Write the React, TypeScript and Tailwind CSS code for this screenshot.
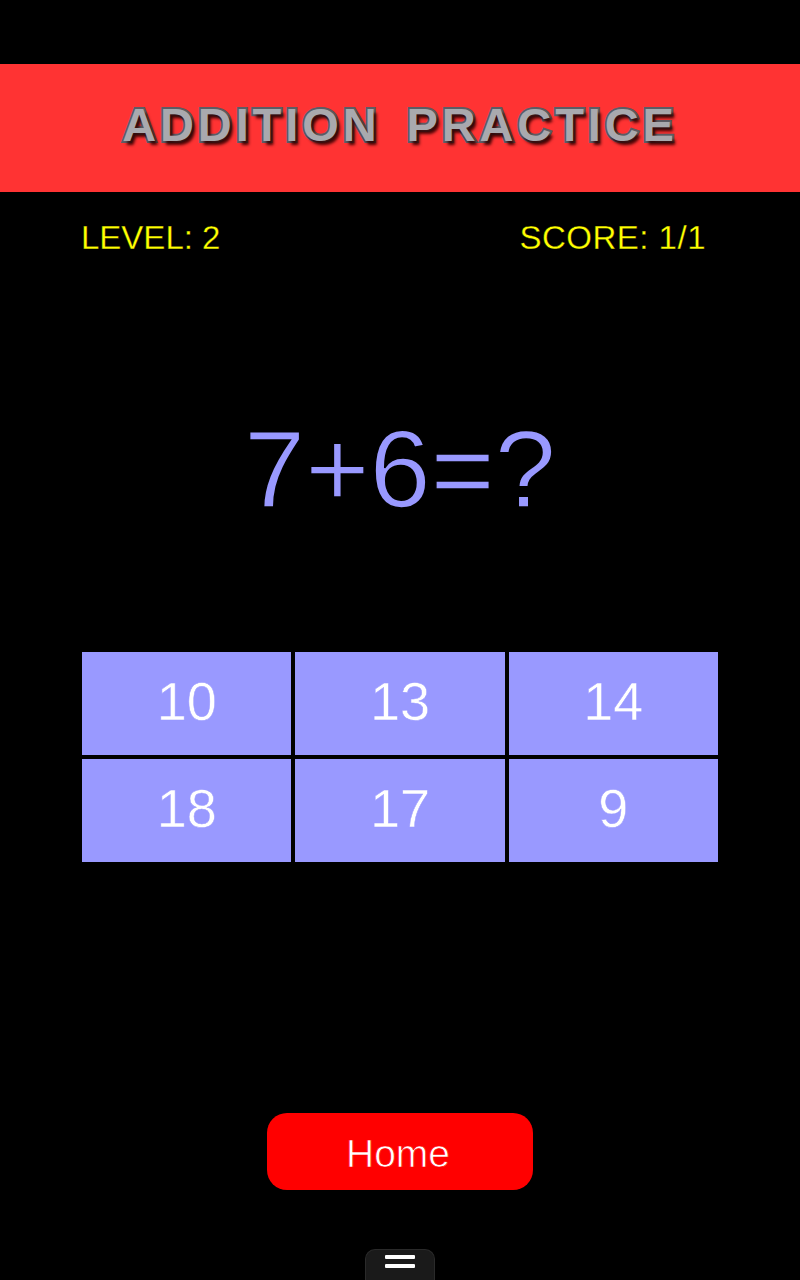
export default function App() {
  const answers = ['10', '13', '14', '18', '17', '9']

  return (
    <div className="flex h-[1280px] w-[800px] flex-col overflow-hidden bg-black font-['Liberation_Sans',Arial,sans-serif]">
      <div className="mt-16 flex h-32 items-center justify-center bg-[#ff3333] pb-[8px]">
        <h1 className="text-[47px] leading-none font-bold tracking-[3.9px] text-[#a9a9ae] [word-spacing:9px] [-webkit-text-stroke:4px_#5c5c64] [paint-order:stroke_fill] [text-shadow:3px_4px_3px_rgba(50,0,0,0.9)]">
          ADDITION PRACTICE
        </h1>
      </div>

      <div className="mt-[26px] flex justify-between pr-[94px] pl-[81px] text-[33px] leading-10 text-[#ffff00] [-webkit-text-stroke:0.3px_#000]">
        <span>LEVEL: 2</span>
        <span className="tracking-[0.5px]">SCORE: 1/1</span>
      </div>

      <div className="mt-[148px] text-center text-[110px] leading-[125px] text-[#9999ff] [-webkit-text-stroke:1.5px_#000]">7+6=?</div>

      <div className="mx-[82px] mt-[121px] grid grid-cols-3 gap-1">
        {answers.map((answer) => (
          <button key={answer} className="flex h-[103px] items-center justify-center bg-[#9999ff] pb-[4px] text-[54px] text-white [-webkit-text-stroke:0.5px_#9999ff]">
            {answer}
          </button>
        ))}
      </div>

      <button className="mx-auto mt-[251px] flex h-[77px] w-[266px] items-center justify-center rounded-[20px] bg-[#ff0000] pt-[5px] pr-[4px] text-[39px] text-white [-webkit-text-stroke:0.7px_#ff0000]">
        Home
      </button>

      <div className="mx-auto mt-auto flex h-[31px] w-[70px] flex-col items-center gap-[5px] rounded-t-[10px] border border-b-0 border-[#2a2a2a] bg-[#1a1a1a] pt-[5px]">
        <div className="h-1 w-[30px] rounded-[1px] bg-white" />
        <div className="h-1 w-[30px] rounded-[1px] bg-white" />
      </div>
    </div>
  )
}
